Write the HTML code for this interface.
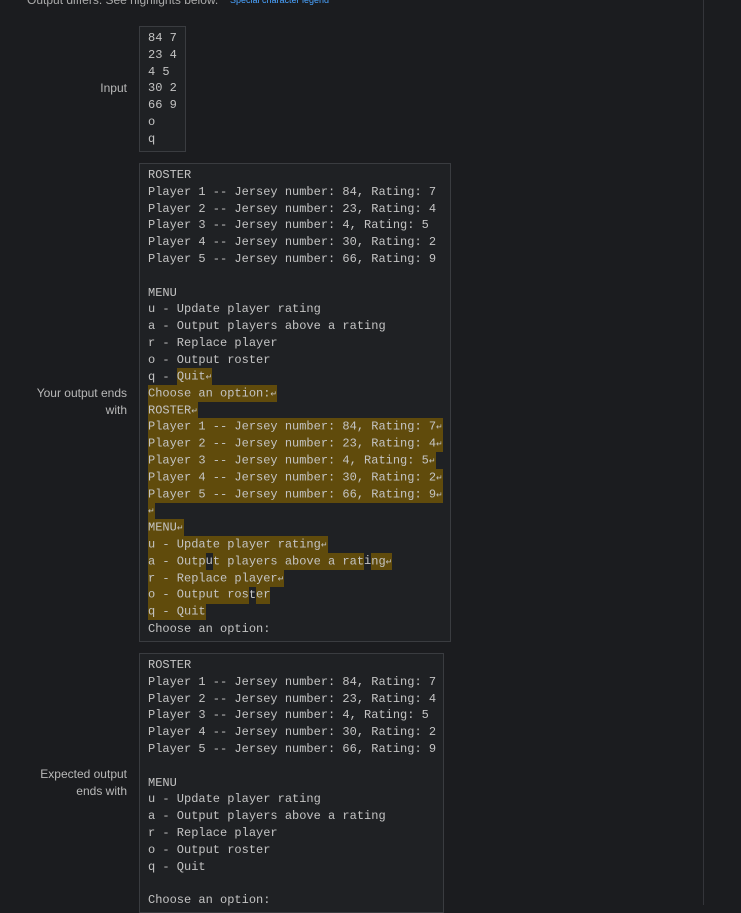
<!DOCTYPE html>
<html><head><style>
body{margin:0;background:#1b1c1f;width:741px;height:905px;overflow:hidden;position:relative;font-family:"Liberation Sans",sans-serif;}
.vl{position:absolute;left:703px;top:0;width:1px;height:905px;background:#34353a;}
.box{position:absolute;background:#1f2124;border:1px solid #3a3c40;box-sizing:border-box;}
pre{margin:0;font-family:"Liberation Mono",monospace;font-size:12px;line-height:16.8px;color:#c4c4c4;white-space:pre;}
.lbl{position:absolute;right:614px;text-align:right;font-size:12px;line-height:17px;color:#b8b8b8;}
.h{background:#604b0c;padding:1.6px 0;}
.r{font-family:"DejaVu Sans",sans-serif;font-size:8px;line-height:1;}
</style></head><body>
<div style="position:absolute;left:27px;top:-7px;font-size:12px;color:#aaa;">Output differs. See highlights below.</div>
<div style="position:absolute;left:230px;top:-5px;font-size:9px;color:#4aa3ff;">Special character legend</div>
<div class="vl"></div>

<div class="lbl" style="top:80px;">Input</div>
<div class="box" style="left:139px;top:26px;width:47px;height:126px;padding:3px 0 0 8px;"><pre>84 7
23 4
4 5
30 2
66 9
o
q</pre></div>

<div class="lbl" style="top:385px;">Your output ends<br>with</div>
<div class="box" style="left:139px;top:163px;width:312px;height:479px;padding:3px 0 0 8px;"><pre>ROSTER
Player 1 -- Jersey number: 84, Rating: 7
Player 2 -- Jersey number: 23, Rating: 4
Player 3 -- Jersey number: 4, Rating: 5
Player 4 -- Jersey number: 30, Rating: 2
Player 5 -- Jersey number: 66, Rating: 9

MENU
u - Update player rating
a - Output players above a rating
r - Replace player
o - Output roster
q - <span class="h">Quit<span class="r">↵</span></span>
<span class="h">Choose an option:<span class="r">↵</span></span>
<span class="h">ROSTER<span class="r">↵</span></span>
<span class="h">Player 1 -- Jersey number: 84, Rating: 7<span class="r">↵</span></span>
<span class="h">Player 2 -- Jersey number: 23, Rating: 4<span class="r">↵</span></span>
<span class="h">Player 3 -- Jersey number: 4, Rating: 5<span class="r">↵</span></span>
<span class="h">Player 4 -- Jersey number: 30, Rating: 2<span class="r">↵</span></span>
<span class="h">Player 5 -- Jersey number: 66, Rating: 9<span class="r">↵</span></span>
<span class="h"><span class="r">↵</span></span>
<span class="h">MENU<span class="r">↵</span></span>
<span class="h">u - Update player rating<span class="r">↵</span></span>
<span class="h">a - Outp</span>u<span class="h">t players above a rat</span>i<span class="h">ng<span class="r">↵</span></span>
<span class="h">r - Replace player<span class="r">↵</span></span>
<span class="h">o - Output ros</span>t<span class="h">er</span>
<span class="h">q - Quit</span>
Choose an option:</pre></div>

<div class="lbl" style="top:766px;">Expected output<br>ends with</div>
<div class="box" style="left:139px;top:653px;width:305px;height:260px;padding:3px 0 0 8px;"><pre>ROSTER
Player 1 -- Jersey number: 84, Rating: 7
Player 2 -- Jersey number: 23, Rating: 4
Player 3 -- Jersey number: 4, Rating: 5
Player 4 -- Jersey number: 30, Rating: 2
Player 5 -- Jersey number: 66, Rating: 9

MENU
u - Update player rating
a - Output players above a rating
r - Replace player
o - Output roster
q - Quit

Choose an option:</pre></div>
</body></html>
